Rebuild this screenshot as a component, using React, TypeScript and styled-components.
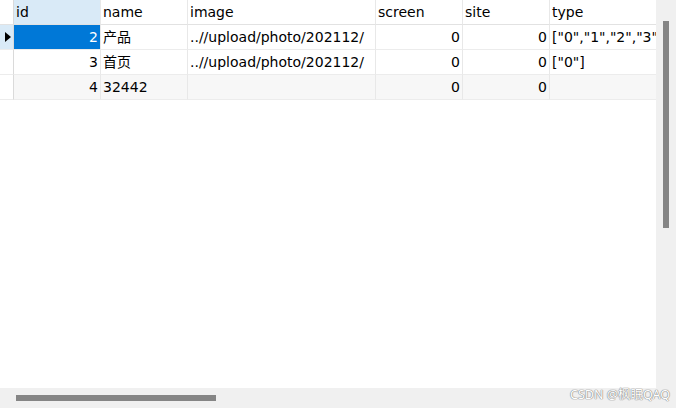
import React from 'react';
import styled, { createGlobalStyle } from 'styled-components';

const GlobalStyle = createGlobalStyle`
  html, body {
    margin: 0;
    padding: 0;
    background: #ffffff;
  }
  body {
    font-family: 'DejaVu Sans', 'Noto Sans CJK SC', sans-serif;
  }
`;

interface Column {
  key: string;
  title: string;
  width: number;
  numeric?: boolean;
}

const COLUMNS: Column[] = [
  { key: 'id', title: 'id', width: 87, numeric: true },
  { key: 'name', title: 'name', width: 87 },
  { key: 'image', title: 'image', width: 188 },
  { key: 'screen', title: 'screen', width: 87, numeric: true },
  { key: 'site', title: 'site', width: 87, numeric: true },
  { key: 'type', title: 'type', width: 187 },
];

const ROWS: Record<string, string>[] = [
  {
    id: '2',
    name: '产品',
    image: '..//upload/photo/202112/',
    screen: '0',
    site: '0',
    type: '["0","1","2","3"]',
  },
  {
    id: '3',
    name: '首页',
    image: '..//upload/photo/202112/',
    screen: '0',
    site: '0',
    type: '["0"]',
  },
  { id: '4', name: '32442', image: '', screen: '0', site: '0', type: '' },
];

const Window = styled.div`
  position: relative;
  width: 676px;
  height: 408px;
  display: grid;
  grid-template-columns: 656px 20px;
  grid-template-rows: 388px 20px;
  background: #f0f0f0;
  overflow: hidden;
`;

const GridArea = styled.div`
  background: #ffffff;
  overflow: hidden;
`;

const Row = styled.div<{ $stripe?: boolean }>`
  display: flex;
  height: 25px;
  background: ${(p) => (p.$stripe ? '#f7f7f7' : '#ffffff')};
`;

const RowHeader = styled.div<{ $active?: boolean; $head?: boolean }>`
  flex: 0 0 14px;
  height: 25px;
  box-sizing: border-box;
  border-right: 1px solid #dadada;
  border-bottom: 1px solid ${(p) => (p.$head ? '#e2e2e2' : '#ececec')};
  background: ${(p) => (p.$active ? '#d9eaf7' : '#ffffff')};
  display: flex;
  align-items: center;
  padding-left: 5px;
`;

const Pointer = styled.span`
  width: 0;
  height: 0;
  border-top: 5px solid transparent;
  border-bottom: 5px solid transparent;
  border-left: 6px solid #000000;
`;

const HeadCell = styled.div<{ $w: number; $selected?: boolean }>`
  flex: 0 0 ${(p) => p.$w}px;
  height: 25px;
  border-right: 1px solid #e8e8e8;
  border-bottom: 1px solid #e2e2e2;
  background: ${(p) => (p.$selected ? '#d9eaf7' : '#ffffff')};
  padding-left: 2px;
  box-sizing: border-box;
  font-size: 14px;
  line-height: 24px;
  color: #000000;
  white-space: nowrap;
  overflow: hidden;
`;

const Cell = styled.div<{ $w: number; $numeric?: boolean; $focused?: boolean }>`
  flex: 0 0 ${(p) => p.$w}px;
  height: 25px;
  border-right: 1px solid #e8e8e8;
  border-bottom: 1px solid #ececec;
  background: ${(p) => (p.$focused ? '#0078d7' : 'transparent')};
  color: ${(p) => (p.$focused ? '#ffffff' : '#000000')};
  text-align: ${(p) => (p.$numeric ? 'right' : 'left')};
  padding: 0 2px;
  box-sizing: border-box;
  font-size: 14px;
  line-height: 24px;
  white-space: nowrap;
  overflow: hidden;
`;

const VTrack = styled.div`
  grid-row: 1 / 3;
  grid-column: 2;
  background: #f0f0f0;
  padding: 21px 0 0 7px;
  box-sizing: border-box;
`;

const VThumb = styled.div`
  width: 6px;
  height: 207px;
  background: #858585;
`;

const HTrack = styled.div`
  background: #f0f0f0;
  padding: 7px 0 0 16px;
  box-sizing: border-box;
`;

const HThumb = styled.div`
  width: 200px;
  height: 6px;
  background: #858585;
`;

const Watermark = styled.span`
  position: absolute;
  right: 6px;
  bottom: 6px;
  font-family: 'Noto Sans', 'Noto Sans CJK SC', sans-serif;
  font-size: 12.5px;
  line-height: 14px;
  color: #ffffff;
  text-shadow: 0 0 1px #8a8a8a, 0 0 1px #8a8a8a, 0 0 1px #8a8a8a;
`;

export default function App() {
  return (
    <>
      <GlobalStyle />
      <Window>
        <GridArea>
          <Row>
            <RowHeader $head />
            {COLUMNS.map((c) => (
              <HeadCell key={c.key} $w={c.width} $selected={c.key === 'id'}>
                {c.title}
              </HeadCell>
            ))}
          </Row>
          {ROWS.map((r, i) => (
            <Row key={r.id} $stripe={i === 2}>
              <RowHeader $active={i === 0}>{i === 0 && <Pointer />}</RowHeader>
              {COLUMNS.map((c) => (
                <Cell
                  key={c.key}
                  $w={c.width}
                  $numeric={c.numeric}
                  $focused={i === 0 && c.key === 'id'}>
                  {r[c.key]}
                </Cell>
              ))}
            </Row>
          ))}
        </GridArea>
        <VTrack>
          <VThumb />
        </VTrack>
        <HTrack>
          <HThumb />
        </HTrack>
        <Watermark>CSDN @枫眠QAQ</Watermark>
      </Window>
    </>
  );
}
